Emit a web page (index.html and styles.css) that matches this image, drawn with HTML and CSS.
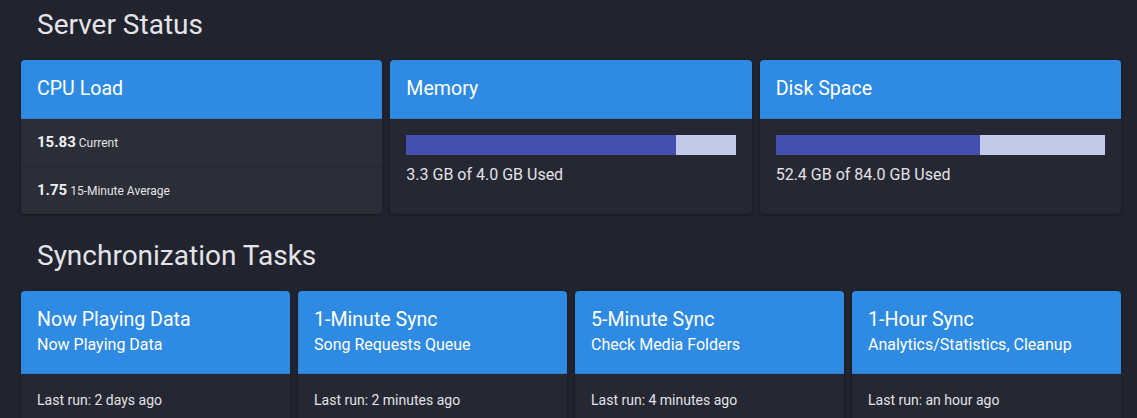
FILE: index.html
```html
<!DOCTYPE html>
<html lang="en">
<head>
<meta charset="utf-8">
<title>Server Status</title>
<link rel="stylesheet" href="styles.css">
</head>
<body>
<main class="page">
  <section class="section">
    <h2 class="section-title">Server Status</h2>
    <div class="row row-3">
      <div class="card">
        <div class="card-header"><h3 class="card-title">CPU Load</h3></div>
        <ul class="list">
          <li class="list-item"><b class="value">15.83</b> <small class="label">Current</small></li>
          <li class="list-item"><b class="value">1.75</b> <small class="label">15-Minute Average</small></li>
        </ul>
      </div>
      <div class="card">
        <div class="card-header"><h3 class="card-title">Memory</h3></div>
        <div class="card-body">
          <div class="progress"><div class="progress-bar" style="width: 81.8%"></div></div>
          <p class="usage">3.3 GB of 4.0 GB Used</p>
        </div>
      </div>
      <div class="card">
        <div class="card-header"><h3 class="card-title">Disk Space</h3></div>
        <div class="card-body">
          <div class="progress"><div class="progress-bar" style="width: 62%"></div></div>
          <p class="usage">52.4 GB of 84.0 GB Used</p>
        </div>
      </div>
    </div>
  </section>
  <section class="section">
    <h2 class="section-title">Synchronization Tasks</h2>
    <div class="row row-4">
      <div class="card">
        <div class="card-header tall">
          <h3 class="card-title">Now Playing Data</h3>
          <div class="card-subtitle">Now Playing Data</div>
        </div>
        <div class="card-body"><p class="last-run">Last run: 2 days ago</p></div>
      </div>
      <div class="card">
        <div class="card-header tall">
          <h3 class="card-title">1-Minute Sync</h3>
          <div class="card-subtitle">Song Requests Queue</div>
        </div>
        <div class="card-body"><p class="last-run">Last run: 2 minutes ago</p></div>
      </div>
      <div class="card">
        <div class="card-header tall">
          <h3 class="card-title">5-Minute Sync</h3>
          <div class="card-subtitle">Check Media Folders</div>
        </div>
        <div class="card-body"><p class="last-run">Last run: 4 minutes ago</p></div>
      </div>
      <div class="card">
        <div class="card-header tall">
          <h3 class="card-title">1-Hour Sync</h3>
          <div class="card-subtitle">Analytics/Statistics, Cleanup</div>
        </div>
        <div class="card-body"><p class="last-run">Last run: an hour ago</p></div>
      </div>
    </div>
  </section>
</main>
</body>
</html>
```

FILE: styles.css
```css
html, body {
  margin: 0;
  padding: 0;
  background: #21232e;
  color: #e2e2e6;
  font-family: Roboto, "Liberation Sans", Arial, sans-serif;
}

.page {
  padding: 8px 16px 0 21px;
  width: 1100px;
}

.section {
  margin-bottom: 25px;
}

.section-title {
  margin: 0 0 18px 16px;
  font-size: 28px;
  font-weight: 400;
  line-height: 34px;
  color: #e4e4e8;
}

.row {
  display: grid;
  gap: 8px;
}

.row-3 { grid-template-columns: repeat(3, 1fr); }
.row-4 { grid-template-columns: repeat(4, 1fr); }

.card {
  background: #252733;
  border-radius: 4px;
  overflow: hidden;
  box-shadow: 0 1px 3px rgba(0, 0, 0, 0.35);
  display: flex;
  flex-direction: column;
}

.card-header {
  background: #2e8ae2;
  color: #ffffff;
  padding: 16px 16px;
  border-bottom: 1px solid #2b7ed0;
}

.card-header.tall {
  padding-bottom: 16px;
}

.card-title {
  margin: 0;
  font-size: 19.6px;
  font-weight: 400;
  line-height: 26px;
}

.card-subtitle {
  font-size: 16px;
  line-height: 24px;
}

.list {
  list-style: none;
  margin: 0;
  padding: 0;
  flex: 1;
}

.list-item {
  background: #2b2d37;
  padding: 12px 16px;
  line-height: 22px;
  border-bottom: 1px solid #24262f;
  font-size: 12px;
}

.list-item:last-child {
  border-bottom: 0;
}

.value {
  font-size: 15px;
  font-weight: 700;
  color: #f0f0f2;
}

.label {
  font-size: 12px;
  color: #e2e2e6;
}

.card-body {
  padding: 16px;
  flex: 1;
}

.progress {
  height: 20px;
  background: #c5c9e8;
  display: flex;
}

.progress-bar {
  background: #4350af;
  height: 100%;
}

.usage {
  margin: 8px 0 0;
  font-size: 16px;
  line-height: 24px;
}

.last-run {
  margin: 0;
  font-size: 14px;
  line-height: 21px;
}
```
